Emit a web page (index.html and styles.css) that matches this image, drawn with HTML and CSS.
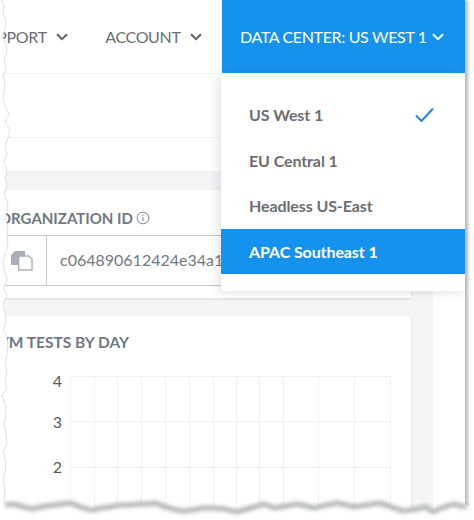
FILE: index.html
```html
<!DOCTYPE html>
<html lang="en">
<head>
<meta charset="utf-8">
<title>Data center menu</title>
<link rel="stylesheet" href="styles.css">
</head>
<body>
<div class="screen">
  <header class="topbar">
    <div class="nav-item"><span class="nav-label">SUPPORT</span> <svg class="chev" viewBox="0 0 12 8"><path d="M1 1.2l5 5 5-5"/></svg></div>
    <div class="nav-item"><span class="nav-label">ACCOUNT</span> <svg class="chev" viewBox="0 0 12 8"><path d="M1 1.2l5 5 5-5"/></svg></div>
    <div class="dc">
      <span class="dc-label">DATA CENTER: US WEST 1</span> <svg class="chev chev-white" viewBox="0 0 12 8"><path d="M1 1.2l5 5 5-5"/></svg>
      <div class="menu">
        <div class="menu-item">US West 1 <svg class="check" viewBox="0 0 20 16"><path d="M1.5 8.5l5.5 5.5L18.5 1.5"/></svg></div>
        <div class="menu-item">EU Central 1</div>
        <div class="menu-item">Headless US-East</div>
        <div class="menu-item menu-active">APAC Southeast 1</div>
      </div>
    </div>
  </header>
  <div class="subbar"></div>
  <div class="filterbar"></div>
  <div class="layout">
    <main class="content">
      <section class="card card-org">
        <h2 class="card-title">ORGANIZATION ID
          <svg class="info" viewBox="0 0 14 14"><circle cx="7" cy="7" r="5.8"/><path d="M7 6.2v4M7 3.5v1.4"/></svg>
        </h2>
        <div class="id-row">
          <div class="copy-cell">
            <svg class="copy" viewBox="0 0 22 20"><path class="copy-back" d="M4 0h10v14H0V4z"/><path class="copy-front" d="M7.700 5h10.300l3 3v11H7.700z"/></svg>
          </div>
          <div class="id-value">c064890612424e34a12</div>
        </div>
      </section>
      <section class="card card-chart">
        <h2 class="card-title card-title-wide">VM TESTS BY DAY</h2>
        <div class="chart">
          <div class="axis"><span>4</span><span>3</span><span>2</span></div>
          <svg class="plot" viewBox="0 0 321 140">
            <path d="M0.500 0V140M24.500 0V140M47.500 0V140M71.500 0V140M95.500 0V140M119.500 0V140M143.500 0V140M166.500 0V140M189.500 0V140M213.500 0V140M248.500 0V140M284.500 0V140M320.500 0V140"/>
            <path d="M0 0.500H321M0 45.500H321M0 91.500H321"/>
          </svg>
        </div>
      </section>
    </main>
    <aside class="sidebar"></aside>
  </div>
</div>
<svg class="torn" viewBox="0 0 474 520">
  <defs>
    <filter id="soft" x="-5%" y="-200%" width="110%" height="500%"><feGaussianBlur stdDeviation="2"/></filter>
  </defs>
  <path class="torn-fill" d="M0 0H2L4 6 3 13 6 20 5 30 2 36 6 44 7 52 4 60 6 68 3 76 5 84 4 92 3 100 6 108 9 114 5 122 10 130 8 138 5 146 7 154 4 162 7 170 5 178 7 186 4 194 8 202 7 210 5 218 8 226 7 236 8 246 5 254 3 262 5 272 7 280 4 288 7 296 3 304 5 312 6 322 3 330 7 338 8 346 7 354 5 362 7 372 5 380 7 388 2 396 5 404 6 414 4 424 6 434 7 444 3 452 6 462 5 472 3 480 5 490 4 498 5 503 V520 H0Z"/>
  <path class="torn-line" d="M2 0L4 6 3 13 6 20 5 30 2 36 6 44 7 52 4 60 6 68 3 76 5 84 4 92 3 100 6 108 9 114 5 122 10 130 8 138 5 146 7 154 4 162 7 170 5 178 7 186 4 194 8 202 7 210 5 218 8 226 7 236 8 246 5 254 3 262 5 272 7 280 4 288 7 296 3 304 5 312 6 322 3 330 7 338 8 346 7 354 5 362 7 372 5 380 7 388 2 396 5 404 6 414 4 424 6 434 7 444 3 452 6 462 5 472 3 480 5 490 4 498 5 503"/>
  <path class="torn-fill" d="M0 503L5 503 11 502 17 503 24 505 33 507 40 505 47 504 55 503 62 502 70 501 76 503 80 505 87 507 93 508 101 506 110 505 120 503 130 503 140 502 148 502 155 501 163 504 173 507 182 509 193 508 203 506 213 506 225 507 237 510 247 507 254 505 264 502 271 505 274 506 286 504 297 502 307 504 314 506 327 503 337 501 347 503 354 505 366 503 380 501 389 504 394 506 404 509 410 508 417 507 426 505 433 510 441 506 454 502 460 504 467 505 474 508V520H0Z"/>
  <path class="torn-shadow" filter="url(#soft)" d="M5 503L11 502 17 503 24 505 33 507 40 505 47 504 55 503 62 502 70 501 76 503 80 505 87 507 93 508 101 506 110 505 120 503 130 503 140 502 148 502 155 501 163 504 173 507 182 509 193 508 203 506 213 506 225 507 237 510 247 507 254 505 264 502 271 505 274 506 286 504 297 502 307 504 314 506 327 503 337 501 347 503 354 505 366 503 380 501 389 504 394 506 404 509 410 508 417 507 426 505 433 510 441 506 454 502 460 504 467 505"/>
</svg>
</body>
</html>
```
FILE: styles.css
```css
* { box-sizing: border-box; }
html, body { margin: 0; height: 100%; }
body {
  width: 474px;
  height: 520px;
  position: relative;
  overflow: hidden;
  background: #fff;
  font-family: Lato, "Liberation Sans", sans-serif;
}
.screen {
  width: 465px;
  height: 520px;
  display: flex;
  flex-direction: column;
  background: #fff;
  box-shadow: 3px 0 3px #b9bdbd;
}
.topbar {
  flex: none;
  height: 74px;
  display: flex;
  justify-content: flex-end;
  border-bottom: 1px solid #f0f1f2;
}
.nav-item {
  flex: none;
  display: flex;
  align-items: center;
  gap: 9.500px;
  margin-right: 37px;
  font-size: 16px;
  color: #6a6e73;
  white-space: nowrap;
}
.nav-label { letter-spacing: -.35px; }
.chev { width: 12px; height: 8px; fill: none; stroke: #5f6368; stroke-width: 2; margin-top: 1px; }
.chev-white { stroke: #fff; }
.dc {
  flex: none;
  position: relative;
  width: 243px;
  height: 73px;
  margin-left: -17px;
  padding: 0 0 0 18px;
  display: flex;
  align-items: center;
  gap: 5px;
  background: #1592ee;
  color: #fff;
  font-size: 16px;
  white-space: nowrap;
}
.dc-label { letter-spacing: -.35px; }
.menu {
  position: absolute;
  top: 73px;
  right: 0;
  width: 244px;
  height: 218px;
  padding-top: 19px;
  background: #fff;
  box-shadow: -3px 2px 8px rgba(60, 70, 80, .14);
}
.menu-item {
  height: 45.500px;
  display: flex;
  align-items: center;
  justify-content: space-between;
  padding: 0 30px 0 28px;
  font-size: 16px;
  font-weight: 700;
  letter-spacing: -.1px;
  color: #6d6e70;
}
.menu-active { background: #1592ee; color: #fff; }
.check { width: 21px; height: 16px; fill: none; stroke: #1e88dc; stroke-width: 2; }
.subbar { flex: none; height: 64px; border-bottom: 1px solid #f0f1f2; }
.filterbar { flex: none; height: 33px; }
.layout { flex: 1; display: flex; min-height: 0; background: #f3f4f6; }
.content { flex: 1; min-width: 0; padding: 19px 22px 0 0; }
.sidebar { flex: none; width: 32px; background: #fff; }
.card {
  background: #fff;
  box-shadow: 0 1px 2px rgba(60, 70, 80, .15);
}
.card-org { height: 108px; padding-top: 18px; }
.card-chart { height: 220px; margin-top: 18px; padding-top: 16px; }
.card-title {
  margin: 0 0 0 -1px;
  display: flex;
  align-items: center;
  gap: 3px;
  height: 20px;
  font-size: 15px;
  font-weight: 700;
  color: #707983;
  white-space: nowrap;
}
.card-title-wide { font-size: 15.500px; margin-left: -2px; }
.info { width: 14px; height: 14px; fill: none; stroke: #7e868e; stroke-width: 1; }
.id-row {
  display: flex;
  height: 51px;
  margin-top: 7px;
  border-top: 1px solid #c6c9cd;
  border-bottom: 1px solid #c6c9cd;
}
.copy-cell {
  flex: none;
  width: 47px;
  padding: 15px 0 0 11px;
  border-right: 1px solid #c6c9cd;
}
.copy { display: block; width: 22px; height: 20px; }
.copy-back { fill: #a9b0b8; }
.copy-front { fill: #fff; stroke: #a9b0b8; stroke-width: 1.400; }
.id-value {
  padding: 0 0 2px 13px;
  display: flex;
  align-items: center;
  font-size: 16px;
  color: #74787c;
  white-space: nowrap;
}
.chart { display: flex; margin-top: 24px; }
.axis {
  flex: none;
  width: 62px;
  height: 120px;
  display: flex;
  flex-direction: column;
  align-items: flex-end;
  font-size: 16px;
  color: #55595d;
}
.axis span { height: 20px; line-height: 20px; }
.axis span:nth-child(1) { margin-top: -5px; }
.axis span:nth-child(2) { margin-top: 21px; }
.axis span:nth-child(3) { margin-top: 25px; }
.plot {
  flex: none;
  display: block;
  width: 321px;
  height: 140px;
  margin-left: 8px;
  fill: none;
  stroke: #eff0f2;
  stroke-width: 1;
}
.torn { position: absolute; inset: 0; width: 474px; height: 520px; }
.torn-fill { fill: #fff; }
.torn-line { fill: none; stroke: #cfd1d3; stroke-width: .7; }
.torn-shadow { fill: none; stroke: #a0a4a4; stroke-width: 4; transform: translateY(2px); }
```
